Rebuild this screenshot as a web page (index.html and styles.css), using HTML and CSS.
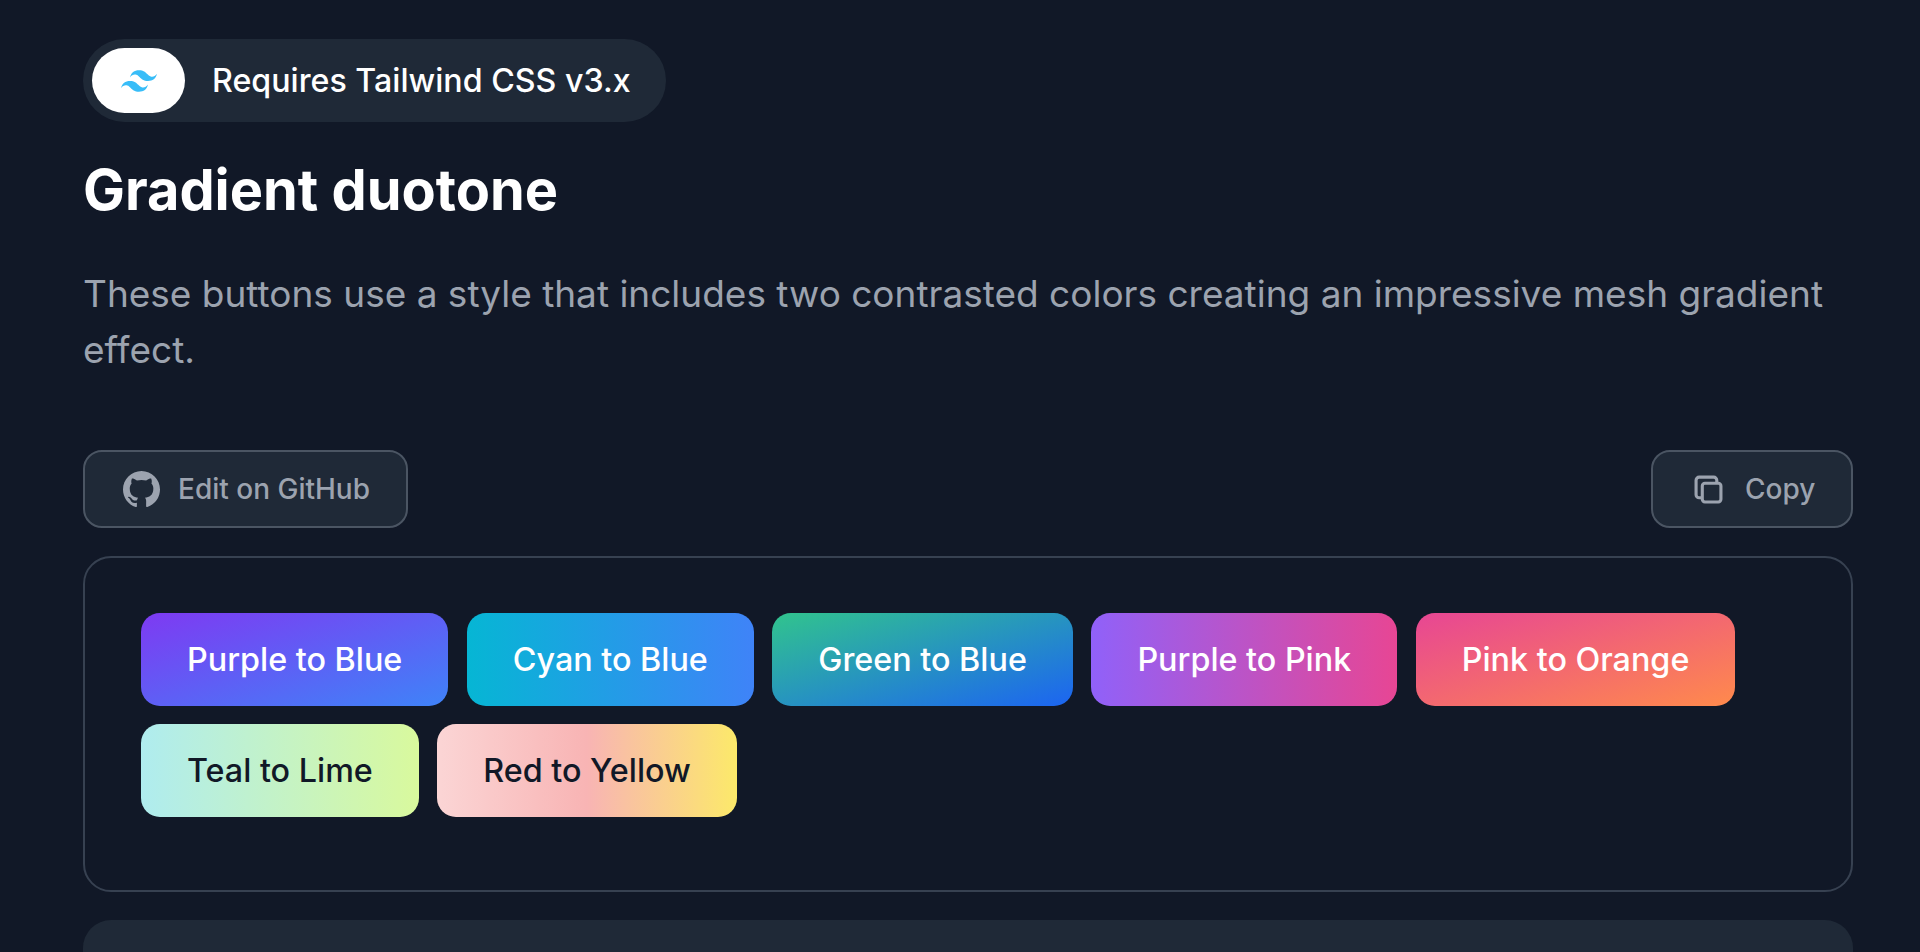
FILE: index.html
```html
<!DOCTYPE html>
<html>
<head>
    <meta charset="utf-8"/>
    <title>Gradient duotone</title>
    <link rel="stylesheet" href="styles.css">
</head>
<body>
<div class="badge">
    <span class="badge-logo">
        <svg viewBox="0 0 24 24" width="36" height="36"><path fill="#38bdf8" d="M12.001 4.8c-3.2 0-5.2 1.6-6 4.8 1.2-1.6 2.6-2.2 4.2-1.8.913.228 1.565.89 2.288 1.624C13.666 10.618 15.027 12 18.001 12c3.2 0 5.2-1.6 6-4.8-1.2 1.6-2.6 2.2-4.2 1.8-.913-.228-1.565-.89-2.288-1.624C16.337 6.182 14.976 4.8 12.001 4.8zm-6 7.2c-3.2 0-5.2 1.6-6 4.8 1.2-1.6 2.6-2.2 4.2-1.8.913.228 1.565.89 2.288 1.624 1.177 1.194 2.538 2.576 5.512 2.576 3.2 0 5.2-1.6 6-4.8-1.2 1.6-2.6 2.2-4.2 1.8-.913-.228-1.565-.89-2.288-1.624C10.337 13.382 8.976 12 6.001 12z"/></svg>
    </span>
    <span class="badge-text">Requires Tailwind CSS v3.x</span>
</div>
<h2 class="title">Gradient duotone</h2>
<p class="desc">These buttons use a style that includes two contrasted colors creating an impressive mesh gradient effect.</p>
<div class="toolbar">
    <a class="tool github">
        <svg viewBox="0 0 16 16" width="37" height="37"><path fill="currentColor" d="M8 0C3.58 0 0 3.58 0 8c0 3.54 2.29 6.53 5.47 7.59.4.07.55-.17.55-.38 0-.19-.01-.82-.01-1.49-2.01.37-2.53-.49-2.69-.94-.09-.23-.48-.94-.82-1.13-.28-.15-.68-.52-.01-.53.63-.01 1.08.58 1.23.82.72 1.21 1.87.87 2.33.66.07-.52.28-.87.51-1.07-1.78-.2-3.64-.89-3.64-3.95 0-.87.31-1.59.82-2.15-.08-.2-.36-1.02.08-2.12 0 0 .67-.21 2.2.82.64-.18 1.32-.27 2-.27.68 0 1.36.09 2 .27 1.53-1.04 2.2-.82 2.2-.82.44 1.1.16 1.92.08 2.12.51.56.82 1.27.82 2.15 0 3.07-1.87 3.75-3.65 3.95.29.25.54.73.54 1.48 0 1.07-.01 1.93-.01 2.2 0 .21.15.46.55.38A8.013 8.013 0 0016 8c0-4.42-3.58-8-8-8z"/></svg>
        Edit on GitHub
    </a>
    <a class="tool copy">
        <svg viewBox="0 0 28 28" width="29" height="29" fill="none" stroke="currentColor" stroke-width="3"><rect x="8" y="8" width="18" height="18" rx="2.5"/><path d="M8 22H5a3 3 0 0 1-3-3V5a3 3 0 0 1 3-3h14a3 3 0 0 1 3 3v3"/></svg>
        Copy
    </a>
</div>
<div class="preview">
    <button class="btn purple-blue">Purple to Blue</button>
    <button class="btn cyan-blue">Cyan to Blue</button>
    <button class="btn green-blue">Green to Blue</button>
    <button class="btn purple-pink">Purple to Pink</button>
    <button class="btn pink-orange">Pink to Orange</button>
    <button class="btn dark teal-lime">Teal to Lime</button>
    <button class="btn dark red-yellow">Red to Yellow</button>
</div>
<div class="code"></div>
</body>
</html>
```

FILE: styles.css
```css
* {
    margin: 0;
    padding: 0;
    box-sizing: border-box;
    font-family: Inter, "Liberation Sans", sans-serif;
}
body {
    padding: 39px 67px 0 83px;
    background: #111827;
}
.badge {
    display: flex;
    align-items: center;
    width: 583px;
    height: 83px;
    padding-left: 9px;
    border-radius: 42px;
    background: #1f2937;
}
.badge-logo {
    display: flex;
    align-items: center;
    justify-content: center;
    width: 93px;
    height: 65px;
    border-radius: 33px;
    background: #fff;
}
.badge-text {
    margin-left: 27px;
    font-size: 32.2px;
    font-weight: 500;
    color: #fff;
}
.title {
    margin-top: 34px;
    font-size: 55.9px;
    line-height: 68px;
    font-weight: 700;
    color: #fff;
}
.desc {
    margin-top: 42px;
    font-size: 37px;
    line-height: 56px;
    color: #9ca3af;
}
.toolbar {
    display: flex;
    justify-content: space-between;
    margin-top: 72px;
}
.tool {
    display: flex;
    align-items: center;
    height: 78px;
    border: 2px solid #4b5563;
    border-radius: 19px;
    background: #1f2937;
    font-size: 28px;
    font-weight: 500;
    color: #9ca3af;
}
.github {
    width: 325px;
    padding-left: 38px;
    gap: 18px;
}
.copy {
    width: 202px;
    padding-left: 41px;
    gap: 22px;
}
.preview {
    display: flex;
    flex-wrap: wrap;
    align-content: flex-start;
    gap: 18px 18.5px;
    height: 336px;
    margin-top: 28px;
    padding: 55px 56px;
    border: 2px solid #374151;
    border-radius: 28px;
}
.btn {
    height: 93px;
    padding: 0 46px;
    border: none;
    border-radius: 19px;
    font-size: 32.3px;
    font-weight: 500;
    color: #fff;
}
.btn.dark {
    color: #111827;
}
.purple-blue { background: linear-gradient(to bottom right, #7e3af2, #3f83f8); }
.cyan-blue { background: linear-gradient(to right, #06b6d4, #3f83f8); }
.green-blue { background: linear-gradient(to bottom right, #31c48d, #1c64f2); }
.purple-pink { background: linear-gradient(to right, #9061f9, #e74694); }
.pink-orange { background: linear-gradient(to bottom right, #e74694, #ff8a4c); }
.teal-lime { background: linear-gradient(to right, #afecef, #d9f99d); }
.red-yellow { background: linear-gradient(to right, #fbd5d5, #f8b4b4, #fce96a); }
.code {
    height: 33px;
    margin-top: 28px;
    border-radius: 28px 28px 0 0;
    background: #1f2937;
}
```
